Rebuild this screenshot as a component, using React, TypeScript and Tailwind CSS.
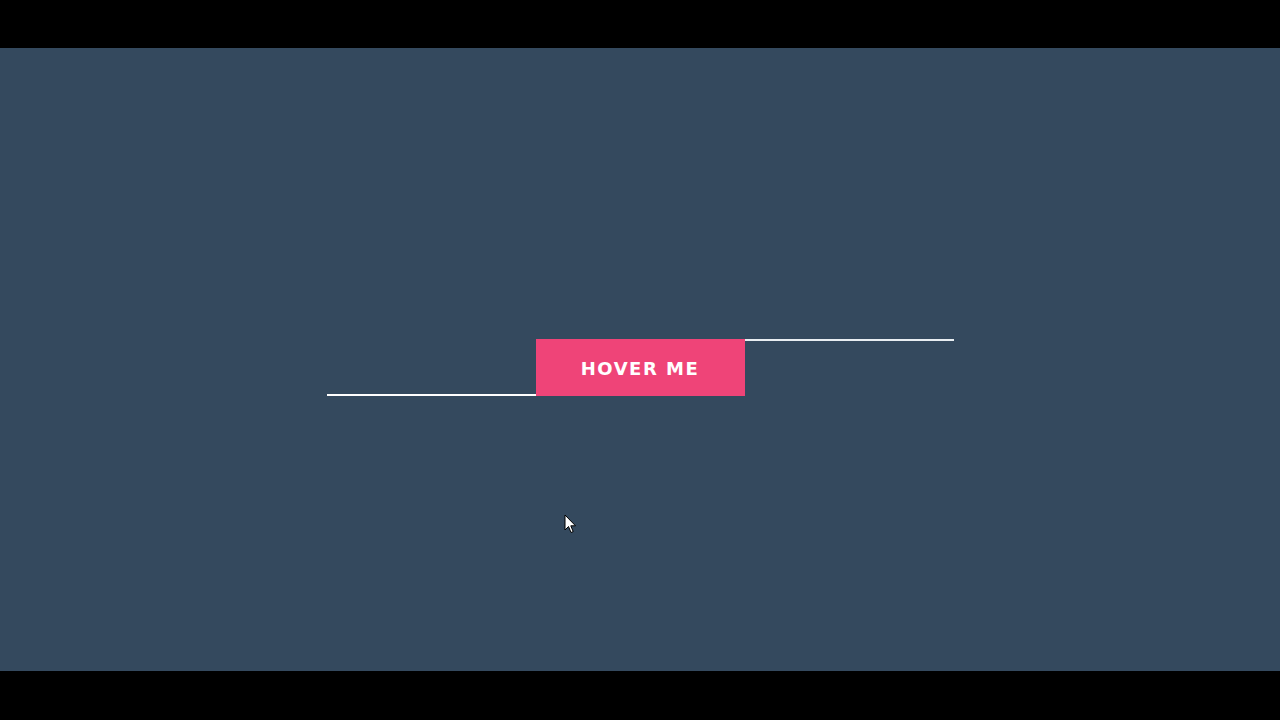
export default function App() {
  return (
    <div className="flex h-[720px] w-[1280px] flex-col bg-black">
      <div className="h-[48px] shrink-0" />
      <main className="relative flex h-[623px] shrink-0 items-center justify-center bg-[#34495e]">
        <div className="mb-[-15px] flex items-stretch">
          {/* lower-left rule */}
          <div className="flex h-[57px] w-[209px] items-end">
            <div className="h-[2px] w-full bg-white" />
          </div>
          <button className="flex h-[57px] w-[209px] items-center justify-center bg-[#ef4478] pt-[2px] font-['DejaVu_Sans',sans-serif] text-[18px] font-bold tracking-[1.5px] text-white">
            HOVER ME
          </button>
          {/* upper-right rule */}
          <div className="flex h-[57px] w-[209px] items-start">
            <div className="h-[2px] w-full bg-[#e8eef2]" />
          </div>
        </div>
        {/* mouse pointer */}
        <svg
          className="absolute left-[564px] top-[466px]"
          width="13"
          height="20"
          viewBox="0 0 13 20"
        >
          <path
            d="M1 1 L1 16 L4.5 12.5 L7 18.5 L9.2 17.6 L6.8 11.8 L11.5 11.8 Z"
            fill="#ffffff"
            stroke="#000000"
            strokeWidth="1"
            strokeLinejoin="round"
          />
        </svg>
      </main>
    </div>
  );
}
